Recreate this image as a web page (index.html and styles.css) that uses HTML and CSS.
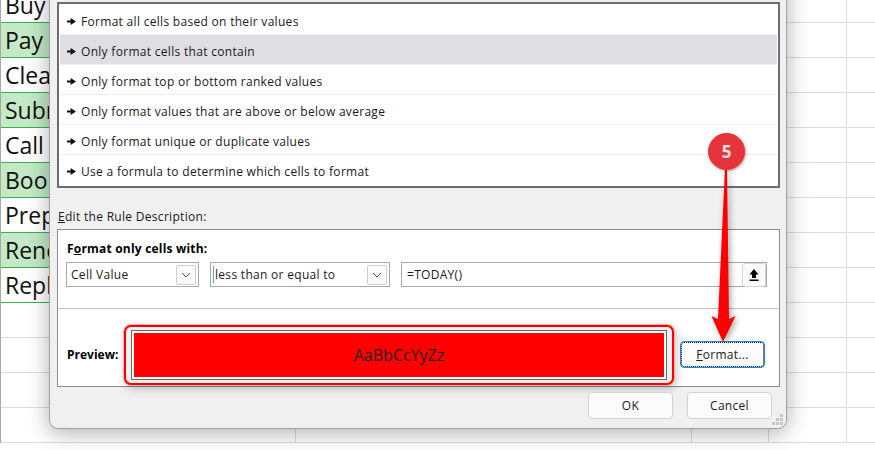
FILE: index.html
```html
<!DOCTYPE html>
<html lang="en">

<head>
    <meta charset="UTF-8">
    <meta name="viewport" content="width=device-width, initial-scale=1.0">
    <title>New Formatting Rule</title>
    <link rel="stylesheet" href="styles.css">
</head>

<body>

    <div class="sheet">
        <div class="row"><div class="cell">Buy milk</div></div>
        <div class="row"><div class="cell green">Pay rent</div></div>
        <div class="row"><div class="cell">Clean</div></div>
        <div class="row"><div class="cell green">Submit</div></div>
        <div class="row"><div class="cell">Call</div></div>
        <div class="row"><div class="cell green">Book</div></div>
        <div class="row"><div class="cell">Prepare</div></div>
        <div class="row"><div class="cell green">Renew</div></div>
        <div class="row"><div class="cell">Reply</div></div>
        <div class="row"></div>
        <div class="row"></div>
        <div class="row"></div>
        <div class="row"></div>
    </div>

    <div class="dialog">
        <ul class="rule-list">
            <li><span class="mark"></span>Format all cells based on their values</li>
            <li class="selected"><span class="mark"></span>Only format cells that contain</li>
            <li><span class="mark"></span>Only format top or bottom ranked values</li>
            <li><span class="mark"></span>Only format values that are above or below average</li>
            <li><span class="mark"></span>Only format unique or duplicate values</li>
            <li><span class="mark"></span>Use a formula to determine which cells to format</li>
        </ul>

        <div class="desc-label"><u>E</u>dit the Rule Description:</div>

        <div class="desc-box">
            <div class="desc-top">
                <div class="desc-title">F<u>o</u>rmat only cells with:</div>
                <div class="field-row">
                    <div class="combo combo-value">
                        <span>Cell Value</span>
                        <span class="combo-btn">
                            <svg width="10" height="6" viewBox="0 0 10 6"><path d="M1 1l4 4 4-4" fill="none" stroke="#555" stroke-width="1"/></svg>
                        </span>
                    </div>
                    <div class="combo combo-op">
                        <span class="caret-text">less than or equal to</span>
                        <span class="combo-btn">
                            <svg width="10" height="6" viewBox="0 0 10 6"><path d="M1 1l4 4 4-4" fill="none" stroke="#555" stroke-width="1"/></svg>
                        </span>
                    </div>
                    <div class="combo combo-formula">
                        <span>=TODAY()</span>
                        <span class="upload-btn">
                            <svg width="12" height="14" viewBox="0 0 12 14"><path d="M6 1L1.5 6.5H4V10H8V6.5H10.5Z M1.5 11.5H10.5V13H1.5Z" fill="#000"/></svg>
                        </span>
                    </div>
                </div>
            </div>
            <div class="desc-bottom">
                <div class="preview-label">Preview:</div>
                <div class="preview-ring">
                    <div class="preview-frame">
                        <div class="preview-fill">AaBbCcYyZz</div>
                    </div>
                </div>
                <button class="btn btn-format"><u>F</u>ormat...</button>
            </div>
        </div>

        <div class="dialog-buttons">
            <button class="btn">OK</button>
            <button class="btn">Cancel</button>
        </div>

        <svg class="grip" width="12" height="12" viewBox="0 0 12 12">
            <path d="M8 0h3v3H8z M4 4h3v3H4z M8 4h3v3H8z M0 8h3v3H0z M4 8h3v3H4z M8 8h3v3H8z" fill="#c4c4c4"/>
        </svg>
    </div>

    <!-- step marker and arrow sit on top of the dialog -->
    <svg class="callout-arrow" width="40" height="190" viewBox="0 0 40 190">
        <path d="M20 0L22 0L24 151L30.5 148L18 174L6.5 148L13 151Z" fill="#ff0000"/>
    </svg>
    <div class="badge">5</div>

</body>

</html>
```

FILE: styles.css
```css
* {
    box-sizing: border-box;
}

html,
body {
    margin: 0;
    height: 100%;
    overflow: hidden;
}

body {
    position: relative;
    width: 875px;
    height: 450px;
    background: #fff;
    font-family: "Open Sans", sans-serif;
    font-size: 12px;
    color: #000;
}

/* spreadsheet behind the dialog */
.sheet {
    margin-top: -12px;
    border-left: 1px solid #a8a8a8;
    background-image:
        linear-gradient(#dcdcdc, #dcdcdc),
        linear-gradient(#dcdcdc, #dcdcdc),
        linear-gradient(#dcdcdc, #dcdcdc),
        linear-gradient(#dcdcdc, #dcdcdc);
    background-size: 1px 100%;
    background-repeat: no-repeat;
    background-position: 294px 0, 690px 0, 767px 0, 845px 0;
}

.row {
    height: 35px;
    border-bottom: 1px solid #dcdcdc;
}

.cell {
    width: 294px;
    height: 35px;
    padding-left: 4px;
    border-bottom: 1px solid #34b34a;
    font-size: 23px;
    line-height: 35px;
    white-space: nowrap;
    color: #111;
}

.green {
    background: #c3e9c6;
}

/* dialog */
.dialog {
    position: absolute;
    left: 49px;
    top: -40px;
    width: 738px;
    height: 469px;
    padding: 41px 7px 0 7px;
    background: #f0f0f0;
    border: 1px solid #a0a0a0;
    border-radius: 0 0 9px 9px;
    box-shadow: 0 4px 22px rgba(0, 0, 0, 0.32);
    color: #1a1a1a;
    letter-spacing: 0.3px;
}

.rule-list {
    list-style: none;
    margin: 0;
    padding: 1px 1px 0 1px;
    width: 723px;
    height: 186px;
    background: #fff;
    border: 2px solid #6e6e72;
}

.rule-list li {
    display: flex;
    align-items: center;
    height: 30px;
    padding: 4px 0 0 7px;
    border-bottom: 1px solid #efefef;
}

.rule-list li:last-child {
    border-bottom-color: transparent;
}

.rule-list .selected {
    background: #dfdee3;
}

.mark {
    width: 9px;
    height: 7px;
    margin-right: 5px;
    background: #111;
    clip-path: polygon(0 35%, 40% 35%, 40% 0, 100% 50%, 40% 100%, 40% 65%, 0 65%);
}

.desc-label {
    height: 41px;
    padding: 20px 0 0 1px;
    line-height: 17px;
}

.desc-box {
    width: 723px;
    height: 158px;
    background: #fff;
    border: 1px solid #8b8b90;
}

.desc-top {
    height: 79px;
    padding: 10px 8px 0 8px;
    border-bottom: 1px solid #c4c4c4;
}

.desc-title {
    height: 22px;
    padding-left: 1px;
    font-weight: 700;
    color: #000;
    line-height: 17px;
    letter-spacing: 0.2px;
}

.field-row {
    display: flex;
    gap: 11px;
}

.combo {
    display: flex;
    align-items: center;
    justify-content: space-between;
    height: 25px;
    padding: 0 2px 0 4px;
    background: #fff;
    border: 1px solid #a8a8a8;
}

.combo-value {
    width: 133px;
}

.combo-op {
    width: 180px;
}

.combo-formula {
    width: 366px;
    padding-left: 5px;
    padding-right: 0;
}

.caret-text {
    border-left: 1px solid #5aa5e0;
    margin-left: -2px;
    padding-left: 1px;
}

.combo-btn {
    display: flex;
    align-items: center;
    justify-content: center;
    width: 20px;
    height: 20px;
    background: #fafafa;
    border: 1px solid #cfcfcf;
    border-radius: 2px;
}

.upload-btn {
    display: flex;
    align-items: center;
    justify-content: center;
    width: 24px;
    height: 24px;
    background: #fbfbfb;
    border: 1px solid #d4d4d4;
    border-radius: 3px;
}

.desc-bottom {
    display: flex;
    align-items: center;
    height: 78px;
    padding-left: 9px;
    padding-top: 13px;
}

.preview-label {
    width: 57px;
    font-weight: 700;
    color: #000;
    letter-spacing: 0;
}

.preview-ring {
    flex: none;
    width: 550px;
    height: 60px;
    padding: 3px 5px;
    background: #efefef;
    border: 2px solid #ff0000;
    border-radius: 7px;
    box-shadow: 0 0 0 1px #ffb0b0, 2px 3px 10px rgba(0, 0, 0, 0.25);
}

.preview-frame {
    height: 100%;
    padding: 2px;
    background: #fff;
    border: 1px solid #6a6a6a;
}

.preview-fill {
    display: flex;
    align-items: center;
    justify-content: center;
    height: 100%;
    background: #ff0000;
    font-size: 16px;
    letter-spacing: 0;
    color: #222;
}

.btn {
    width: 85px;
    height: 27px;
    padding: 0;
    background: #fbfbfb;
    border: 1px solid #d2d2d2;
    border-radius: 4px;
    font-family: "Open Sans", sans-serif;
    font-size: 12px;
    letter-spacing: 0.3px;
    color: #1a1a1a;
}

.btn-format {
    flex: none;
    width: 85px;
    margin-left: 6px;
    border: 1px solid #1a8ad8;
    outline: 1px dotted #000;
    outline-offset: -2px;
}

.dialog-buttons {
    display: flex;
    justify-content: flex-end;
    gap: 14px;
    width: 715px;
    margin-top: 5px;
}

.grip {
    position: absolute;
    right: 2px;
    bottom: 2px;
}

/* annotation */
.callout-arrow {
    position: absolute;
    left: 705px;
    top: 168px;
    filter: drop-shadow(2px 2px 3px rgba(0, 0, 0, 0.35));
}

.badge {
    position: absolute;
    left: 708px;
    top: 133px;
    width: 37px;
    height: 37px;
    background: #e5343c;
    border: 1px solid #ff2a2a;
    border-radius: 50%;
    box-shadow: 1px 1px 3px rgba(0, 0, 0, 0.35);
    color: #fbe4e4;
    font-size: 17px;
    font-weight: 700;
    line-height: 35px;
    text-align: center;
}
```
